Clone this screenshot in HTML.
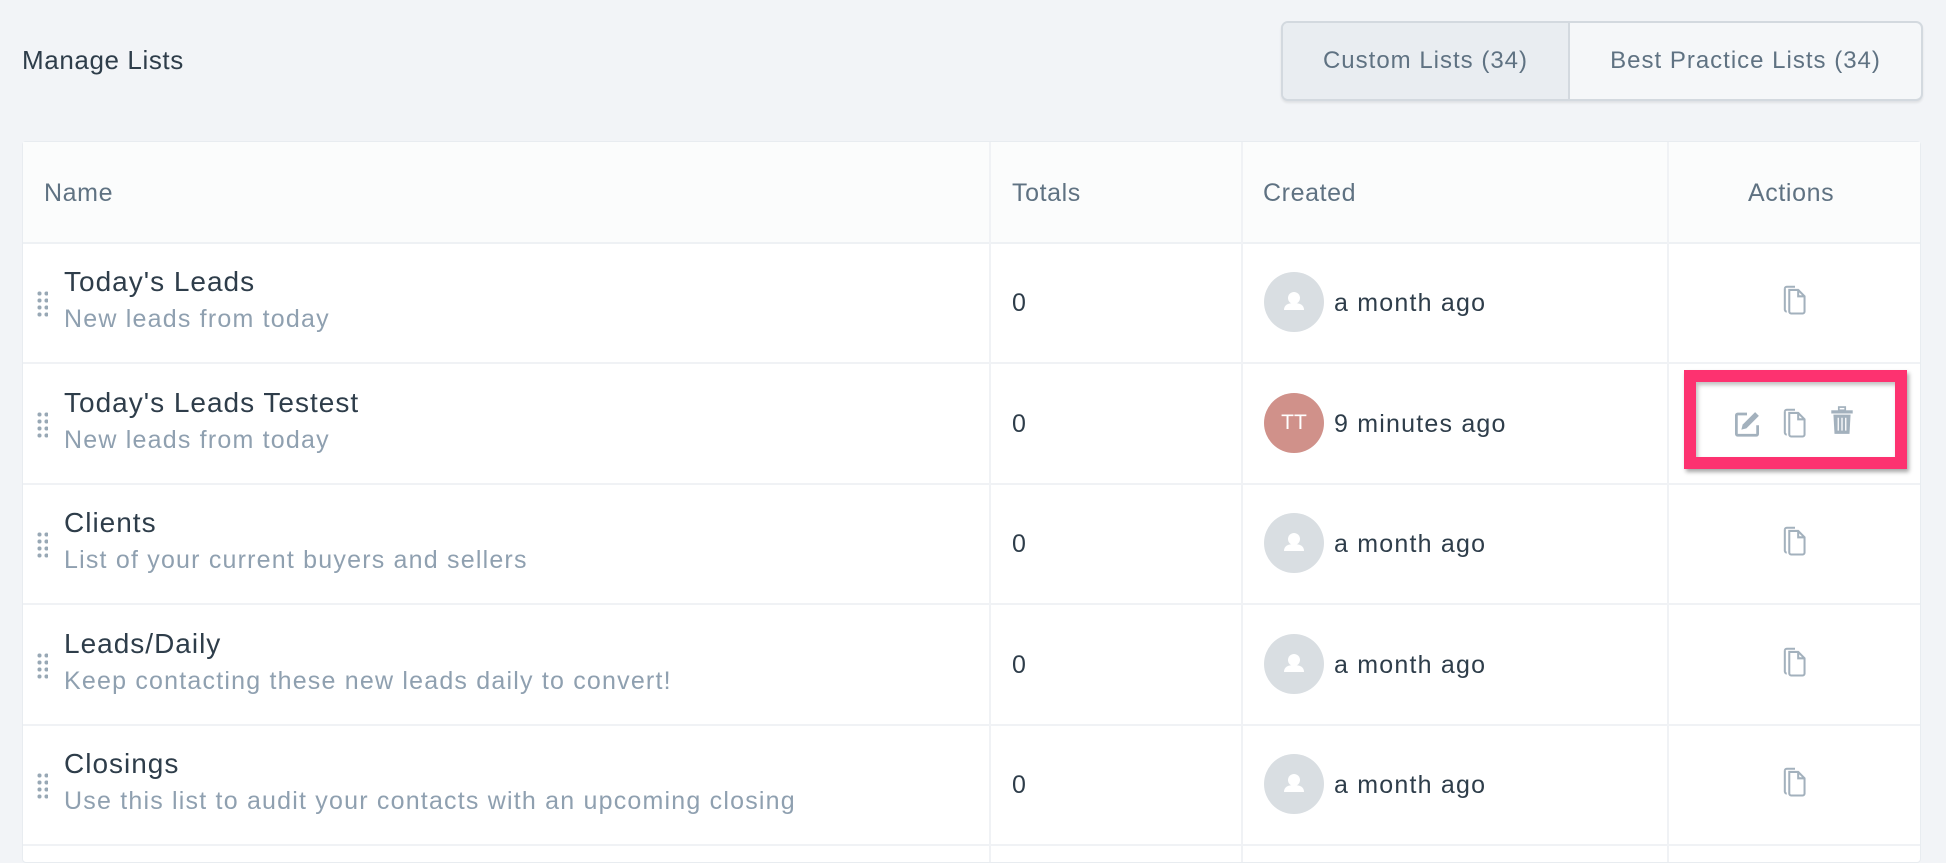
<!DOCTYPE html>
<html><head><style>
body{margin:0;width:1946px;height:852px;background:#f2f4f7;font-family:"Liberation Sans",sans-serif;overflow:hidden;position:relative;color:#2e3d4a}
.abs{position:absolute}
.title{left:22px;top:45px;font-size:26px;letter-spacing:0.6px;color:#2e3d4a}
.tabs{left:1281px;top:21px;width:638px;height:76px;border:2px solid #d3d9df;border-radius:7px;background:#f5f7f9;overflow:hidden;box-shadow:0 2px 2px rgba(0,0,0,.08)}
.tab{position:absolute;top:0;height:76px;line-height:76px;font-size:24px;letter-spacing:1px;color:#5f7282;text-align:center}
.card{left:22px;top:141px;width:1897px;height:720px;background:#fff;border:1px solid #e8ecf0;border-radius:4px}
.hdr{left:0;top:0;width:1897px;height:100px;background:#fbfcfc;border-bottom:2px solid #eef1f4}
.vl{top:0;width:2px;height:720px;background:#f0f2f5}
.hl{left:0;width:1897px;height:2px;background:#f0f2f5}
.h{font-size:25px;letter-spacing:0.6px;color:#5f7282;top:37px}
.rt{font-size:28px;letter-spacing:1px;color:#2e3d4a;left:41px}
.rs{font-size:25px;letter-spacing:1.2px;color:#8fa0b0;left:41px}
.num{font-size:25px;left:989px}
.av{width:60px;height:60px;border-radius:50%;background:#d9dee2;left:1241px}
.when{font-size:25px;letter-spacing:1.2px;left:1311px}
.drag{left:13px;width:12px;height:28px;background-image:radial-gradient(circle,#98a8b5 2px,transparent 2.2px);background-size:7px 7px}
</style></head><body>
<div class="abs title">Manage Lists</div>
<div class="abs tabs">
<div class="tab" style="left:0;width:285px;background:#e9edf1;border-right:2px solid #d3d9df">Custom Lists (34)</div>
<div class="tab" style="left:287px;width:351px">Best Practice Lists (34)</div>
</div>
<div class="abs card">
<div class="abs hdr"></div>
<div class="abs vl" style="left:966px"></div>
<div class="abs vl" style="left:1218px"></div>
<div class="abs vl" style="left:1644px"></div>
<div class="abs h" style="left:21px">Name</div>
<div class="abs h" style="left:989px">Totals</div>
<div class="abs h" style="left:1240px">Created</div>
<div class="abs h" style="left:1725px">Actions</div>
<div id="rows"></div>
</div>
<svg width="0" height="0" style="position:absolute"><defs>
<g id="copy"><path d="M3 3.5V20a1.5 1.5 0 0 0 1.5 1.5" fill="none" stroke="#a3b1bd" stroke-width="1.6"/><path d="M6.5 4.5h7l5 5v12a1.5 1.5 0 0 1-1.5 1.5H8a1.5 1.5 0 0 1-1.5-1.5z M13.5 4.5v5h5" fill="none" stroke="#a3b1bd" stroke-width="1.6"/><path d="M3 3.5a1.5 1.5 0 0 1 1.5-1.5H11" fill="none" stroke="#a3b1bd" stroke-width="1.6"/></g>
</defs></svg>
<script>
var data=[["Today's Leads","New leads from today","a month ago",0],["Today's Leads Testest","New leads from today","9 minutes ago",1],["Clients","List of your current buyers and sellers","a month ago",0],["Leads/Daily","Keep contacting these new leads daily to convert!","a month ago",0],["Closings","Use this list to audit your contacts with an upcoming closing","a month ago",0]];
var h='';
data.forEach(function(d,i){var t=100+i*120.5;
h+='<div class="abs hl" style="top:'+(t+120)+'px"></div>';
h+='<div class="abs rt" style="top:'+(t+24)+'px">'+d[0]+'</div>';
h+='<div class="abs rs" style="top:'+(t+63)+'px">'+d[1]+'</div>';
h+='<div class="abs drag" style="top:'+(t+48)+'px"></div>';
h+='<div class="abs num" style="top:'+(t+47)+'px">0</div>';
if(d[3]) h+='<div class="abs av" style="top:'+(t+30)+'px;background:#d0918a;color:#fff;font-size:21px;line-height:60px;text-align:center">TT</div>';
else h+='<div class="abs av" style="top:'+(t+30)+'px"><svg width="60" height="60"><circle cx="30" cy="26" r="6" fill="#fff"/><path d="M20 38q0-7 10-7t10 7z" fill="#fff"/></svg></div>';
h+='<div class="abs when" style="top:'+(t+47)+'px">'+d[2]+'</div>';
var c='<svg width="28" height="31" viewBox="0 0 22 24"><use href="#copy"/></svg>';
if(d[3]){
h+='<div class="abs" style="left:1709px;top:'+(t+46)+'px"><svg width="30" height="30" viewBox="0 0 24 24"><path d="M12 4H4.5a1 1 0 0 0-1 1v15a1 1 0 0 0 1 1h15a1 1 0 0 0 1-1v-7" fill="none" stroke="#a3b1bd" stroke-width="2.2"/><path d="M18.5 2.5l3 3-10 10-4 1 1-4z" fill="#a3b1bd"/></svg></div>';
h+='<div class="abs" style="left:1758px;top:'+(t+44)+'px">'+c+'</div>';
h+='<div class="abs" style="left:1806px;top:'+(t+43)+'px"><svg width="26" height="30" viewBox="0 0 24 28"><rect x="2" y="4" width="20" height="3" fill="#a3b1bd"/><rect x="9" y="1" width="6" height="3" fill="none" stroke="#a3b1bd" stroke-width="1.6"/><path d="M4 8h16l-1 18H5z" fill="#a3b1bd"/><path d="M8.5 11v12M12 11v12M15.5 11v12" stroke="#fff" stroke-width="1.2"/></svg></div>';
}else h+='<div class="abs" style="left:1758px;top:'+(t+42)+'px">'+c+'</div>';
});
document.getElementById('rows').innerHTML=h;
</script>
<div class="abs" style="left:1684px;top:370px;width:199px;height:75px;border:12px solid #fd3270;box-shadow:2px 3px 4px rgba(0,0,0,.35),inset 2px 3px 4px rgba(0,0,0,.25)"></div>
</body></html>
